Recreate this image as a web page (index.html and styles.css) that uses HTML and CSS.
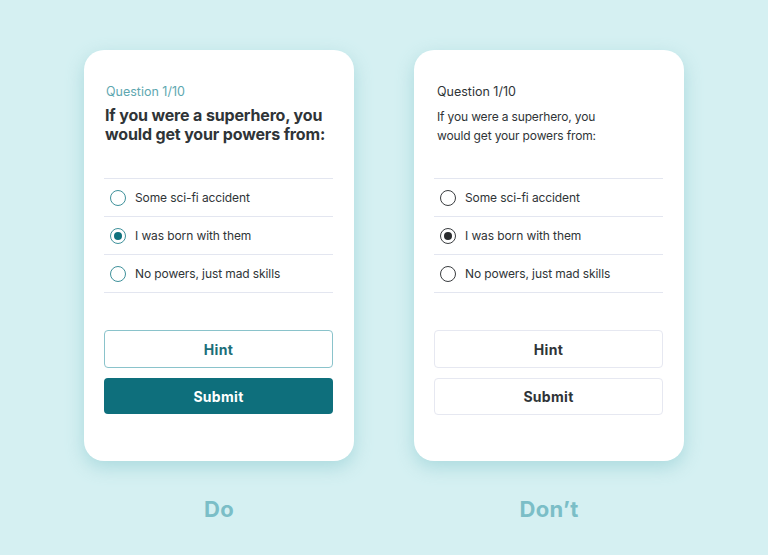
FILE: index.html
```html
<!DOCTYPE html>
<html>
<head>
<meta charset="utf-8">
<link rel="stylesheet" href="styles.css">
</head>
<body>
<div class="stage">
  <div class="col">
    <div class="card do">
      <div class="qlabel">Question 1/10</div>
      <div class="qtitle">If you were a superhero, you<br>would get your powers from:</div>
      <div class="options">
        <div class="opt"><span class="radio"></span><span>Some sci-fi accident</span></div>
        <div class="opt"><span class="radio on"></span><span>I was born with them</span></div>
        <div class="opt"><span class="radio"></span><span>No powers, just mad skills</span></div>
      </div>
      <div class="btns">
        <div class="btn hint">Hint</div>
        <div class="btn submit">Submit</div>
      </div>
    </div>
    <div class="caption">Do</div>
  </div>
  <div class="col">
    <div class="card dont">
      <div class="qlabel">Question 1/10</div>
      <div class="qtitle">If you were a superhero, you<br>would get your powers from:</div>
      <div class="options">
        <div class="opt"><span class="radio"></span><span>Some sci-fi accident</span></div>
        <div class="opt"><span class="radio on"></span><span>I was born with them</span></div>
        <div class="opt"><span class="radio"></span><span>No powers, just mad skills</span></div>
      </div>
      <div class="btns">
        <div class="btn hint">Hint</div>
        <div class="btn submit">Submit</div>
      </div>
    </div>
    <div class="caption">Don’t</div>
  </div>
</div>
</body>
</html>
```
FILE: styles.css
```css
html, body {
  margin: 0;
  padding: 0;
}
body {
  width: 768px;
  height: 555px;
  background: #d5f0f2;
  font-family: Inter, "Noto Sans", sans-serif;
  color: #2f3437;
  overflow: hidden;
}
.stage {
  display: flex;
  justify-content: center;
  gap: 60px;
  padding-top: 50px;
}
.col {
  display: flex;
  flex-direction: column;
  align-items: center;
}
.card {
  box-sizing: border-box;
  width: 270px;
  height: 411px;
  background: #ffffff;
  border-radius: 20px;
  padding: 33px 21px 0 20px;
  box-shadow: 0 6px 18px rgba(120, 190, 198, 0.45);
}
.qlabel {
  font-size: 12.5px;
  line-height: 18px;
  padding-left: 2px;
}
.do .qlabel {
  color: #5ea7b0;
}
.dont .qlabel {
  color: #2f3437;
  padding-left: 3px;
}
.qtitle {
  margin-top: 5px;
  white-space: nowrap;
}
.do .qtitle {
  font-size: 16px;
  font-weight: 700;
  line-height: 19px;
  letter-spacing: -0.15px;
  color: #2f3437;
  padding-left: 1px;
}
.dont .qtitle {
  font-size: 12px;
  line-height: 19px;
  letter-spacing: -0.15px;
  color: #2f3437;
  padding-left: 3px;
  margin-top: 6px;
}
.options {
  margin-top: 34px;
  border-top: 1px solid #e3e6f0;
}
.dont .options {
  margin-top: 33px;
}
.opt {
  display: flex;
  align-items: center;
  height: 37px;
  border-bottom: 1px solid #e3e6f0;
  font-size: 12px;
  letter-spacing: -0.1px;
  padding-left: 6px;
  gap: 9px;
}
.radio {
  box-sizing: border-box;
  width: 16px;
  height: 16px;
  border-radius: 50%;
  display: flex;
  align-items: center;
  justify-content: center;
  flex: none;
}
.do .radio {
  border: 1.5px solid #3f919b;
}
.dont .radio {
  border: 1.5px solid #3a3d40;
}
.radio.on::after {
  content: "";
  width: 8px;
  height: 8px;
  border-radius: 50%;
}
.do .radio.on::after {
  background: #0f717d;
}
.dont .radio.on::after {
  background: #2a2c2e;
}
.btns {
  margin-top: 37px;
  display: flex;
  flex-direction: column;
  gap: 10px;
}
.btn {
  box-sizing: border-box;
  height: 37px;
  border-radius: 4px;
  display: flex;
  align-items: center;
  justify-content: center;
  font-size: 14px;
  font-weight: 700;
  letter-spacing: 0.3px;
}
.do .hint {
  border: 1.5px solid #8ac3cb;
  color: #1b6e79;
  height: 38px;
}
.do .submit {
  background: #0e6f7c;
  color: #ffffff;
  height: 36px;
}
.dont .btn {
  border: 1.5px solid #e6e8f1;
  color: #2f3437;
}
.dont .hint {
  height: 38px;
}
.caption {
  margin-top: 35px;
  font-size: 22px;
  font-weight: 700;
  color: #7bbec7;
  letter-spacing: 0.3px;
}
```
